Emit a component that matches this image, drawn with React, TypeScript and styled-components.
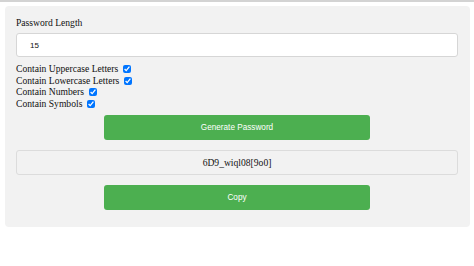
import styled, { createGlobalStyle } from "styled-components";

const GlobalStyle = createGlobalStyle`
  html, body {
    margin: 0;
    padding: 0;
    background: #ffffff;
  }
  body {
    font-family: "Liberation Serif", "Times New Roman", serif;
    color: #111;
  }
`;

const TopBar = styled.div`
  height: 2px;
  background: #d3d3d3;
`;

const Page = styled.main`
  padding: 4px 4px 0 5px;
`;

const Card = styled.section`
  background: #f2f2f2;
  border-radius: 4px;
  padding: 11px 12px 17px 11px;
  display: flex;
  flex-direction: column;
`;

const Label = styled.label`
  font-size: 9.6px;
  line-height: 12px;
  color: #111;
`;

const LengthInput = styled.input`
  box-sizing: border-box;
  margin-top: 4px;
  height: 24px;
  width: 100%;
  padding: 0 13px;
  border: 1px solid #d6d6d6;
  border-radius: 3px;
  background: #fff;
  font-family: "Liberation Sans", Arial, sans-serif;
  font-size: 8px;
  color: #111;
  outline: none;
`;

const Options = styled.div`
  margin-top: 6px;
  display: flex;
  flex-direction: column;
`;

const OptionRow = styled.label`
  display: flex;
  align-items: center;
  gap: 4px;
  font-size: 9.6px;
  line-height: 11.7px;
  height: 11.7px;
  color: #111;
`;

const Check = styled.input`
  width: 8px;
  height: 8px;
  margin: 0 0 0 1px;
  accent-color: #0075ff;
`;

const ActionButton = styled.button<{ $gap: number }>`
  align-self: center;
  width: 60%;
  height: 25px;
  margin-top: ${(p) => p.$gap}px;
  border: none;
  border-radius: 3px;
  background: #4caf50;
  color: #fff;
  font-family: "Liberation Sans", Arial, sans-serif;
  font-size: 8.2px;
  cursor: pointer;
`;

const Output = styled.div`
  box-sizing: border-box;
  margin-top: 10px;
  height: 25px;
  border: 1px solid #dcdcdc;
  border-radius: 3px;
  background: #f2f2f2;
  display: flex;
  align-items: center;
  justify-content: center;
  font-size: 9.6px;
  color: #111;
`;

const options = [
  "Contain Uppercase Letters",
  "Contain Lowercase Letters",
  "Contain Numbers",
  "Contain Symbols",
];

export default function App() {
  return (
    <>
      <GlobalStyle />
      <TopBar />
      <Page>
        <Card>
          <Label htmlFor="len">Password Length</Label>
          <LengthInput id="len" type="text" defaultValue="15" />
          <Options>
            {options.map((o) => (
              <OptionRow key={o}>
                {o}
                <Check type="checkbox" defaultChecked />
              </OptionRow>
            ))}
          </Options>
          <ActionButton $gap={5}>Generate Password</ActionButton>
          <Output>6D9_wiql08[9o0]</Output>
          <ActionButton $gap={10}>Copy</ActionButton>
        </Card>
      </Page>
    </>
  );
}
